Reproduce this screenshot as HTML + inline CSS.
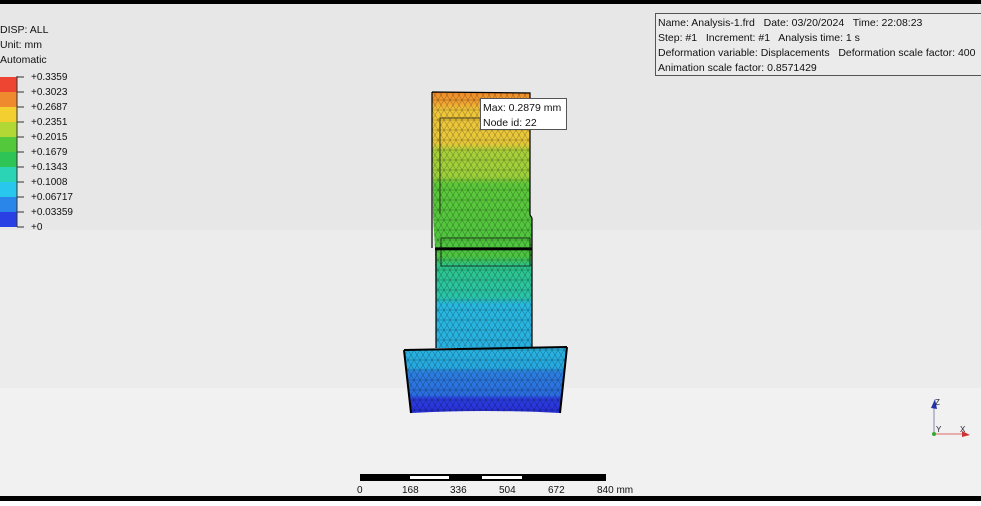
<!DOCTYPE html><html><head><style>
body{margin:0;width:981px;height:501px;overflow:hidden;font-family:"Liberation Sans",sans-serif;}
text{white-space:pre;}
</style></head><body>
<svg width="981" height="501" xmlns="http://www.w3.org/2000/svg" font-family="Liberation Sans, sans-serif" xml:space="preserve">
<defs>
<pattern id="mesh" width="12" height="10" patternUnits="userSpaceOnUse">
<path d="M0 0H12M0 10H12M0 10L6 0L12 10M0 0L6 10L12 0" stroke="#000" stroke-opacity="0.4" stroke-width="0.5" fill="none"/>
</pattern>
<linearGradient id="g1" x1="0" y1="92" x2="0" y2="348" gradientUnits="userSpaceOnUse">
<stop offset="0" stop-color="#f08a2a"/><stop offset="0.04" stop-color="#f0a030"/>
<stop offset="0.07" stop-color="#efc53a"/><stop offset="0.2" stop-color="#e8c83a"/>
<stop offset="0.23" stop-color="#a8d03a"/><stop offset="0.33" stop-color="#9cd03a"/>
<stop offset="0.36" stop-color="#5cc83a"/><stop offset="0.64" stop-color="#4cc440"/>
<stop offset="0.68" stop-color="#2cc48a"/><stop offset="0.8" stop-color="#2ac4a8"/>
<stop offset="0.83" stop-color="#28b8e0"/><stop offset="1" stop-color="#28b0e0"/>
</linearGradient>
<linearGradient id="g2" x1="0" y1="348" x2="0" y2="413" gradientUnits="userSpaceOnUse">
<stop offset="0" stop-color="#28b4e0"/><stop offset="0.3" stop-color="#26a8e0"/>
<stop offset="0.38" stop-color="#2c7ee0"/><stop offset="0.72" stop-color="#2a6ee0"/>
<stop offset="0.78" stop-color="#2a3ee0"/><stop offset="1" stop-color="#2830d8"/>
</linearGradient>
</defs>
<rect width="981" height="501" fill="#f1f1f1"/>
<rect y="0" width="981" height="230" fill="#e7e7e7"/>
<rect y="230" width="981" height="158" fill="#ececec"/>
<rect y="0" width="981" height="4" fill="#000"/>
<rect y="496" width="981" height="5" fill="#000"/>
<g font-size="10.5" fill="#111">
<text x="0" y="33">DISP: ALL</text><text x="0" y="48">Unit: mm</text><text x="0" y="63">Automatic</text>
</g>
<g>
<rect x="0" y="77" width="17" height="15" fill="#ee4432"/>
<rect x="0" y="92" width="17" height="15" fill="#f08a2e"/>
<rect x="0" y="107" width="17" height="15" fill="#f3d030"/>
<rect x="0" y="122" width="17" height="15" fill="#b2d836"/>
<rect x="0" y="137" width="17" height="15" fill="#52c83a"/>
<rect x="0" y="152" width="17" height="15" fill="#2ec456"/>
<rect x="0" y="167" width="17" height="15" fill="#2ad4b4"/>
<rect x="0" y="182" width="17" height="15" fill="#28c8ee"/>
<rect x="0" y="197" width="17" height="15" fill="#2a86e8"/>
<rect x="0" y="212" width="17" height="15" fill="#2840e4"/>
<path d="M17 76V227M17 77H24M17 92H24M17 107H24M17 122H24M17 137H24M17 152H24M17 167H24M17 182H24M17 197H24M17 212H24M17 227H24" stroke="#333" stroke-width="1"/>
</g>
<g font-size="10" fill="#111">
<text x="31" y="80">+0.3359</text><text x="31" y="95">+0.3023</text><text x="31" y="110">+0.2687</text>
<text x="31" y="125">+0.2351</text><text x="31" y="140">+0.2015</text><text x="31" y="155">+0.1679</text>
<text x="31" y="170">+0.1343</text><text x="31" y="185">+0.1008</text><text x="31" y="200">+0.06717</text>
<text x="31" y="215">+0.03359</text><text x="31" y="230">+0</text>
</g>
<rect x="655.5" y="13.5" width="330" height="62" fill="#ebebeb" stroke="#555"/>
<g font-size="10.5" fill="#111">
<text x="658" y="26">Name: Analysis-1.frd   Date: 03/20/2024   Time: 22:08:23</text>
<text x="658" y="41">Step: #1   Increment: #1   Analysis time: 1 s</text>
<text x="658" y="56">Deformation variable: Displacements   Deformation scale factor: 400</text>
<text x="658" y="71">Animation scale factor: 0.8571429</text>
</g>
<path d="M432 92L530 93L530 215L532 218L532 348L436 348L435 248L433 215Z" fill="url(#g1)"/>
<path d="M432 92L530 93L530 215L532 218L532 348L436 348L435 248L433 215Z" fill="url(#mesh)"/>
<path d="M404 350L567 347L560 413Q485 409 411 413Z" fill="url(#g2)"/>
<path d="M404 350L567 347L560 413Q485 409 411 413Z" fill="url(#mesh)"/>
<path d="M432 92L530 93V215M432 92V248M435 248H532M436 248V348M532 218V348M530 215L532 218" stroke="#000" stroke-width="1.2" fill="none"/>
<path d="M435 249H532" stroke="#000" stroke-width="2.5"/>
<path d="M440 118H482M440 118V214M441 238H530V266H441Z" stroke="#111" stroke-width="0.8" fill="none"/>
<path d="M404 350L567 347M404 350L411 413M567 347L560 413" stroke="#000" stroke-width="2" fill="none"/>
<rect x="480.5" y="98.5" width="86" height="31" fill="#fff" stroke="#555"/>
<g font-size="10.5" fill="#111"><text x="483" y="111">Max: 0.2879 mm</text><text x="483" y="126">Node id: 22</text></g>
<rect x="360" y="474" width="246" height="7" fill="#000"/>
<rect x="410" y="476" width="39" height="3" fill="#fff"/>
<rect x="482" y="476" width="40" height="3" fill="#fff"/>
<g font-size="10" fill="#111">
<text x="357" y="493">0</text><text x="402" y="493">168</text><text x="450" y="493">336</text>
<text x="499" y="493">504</text><text x="548" y="493">672</text><text x="597" y="493">840 mm</text>
</g>
<path d="M934 434V404" stroke="#88a" stroke-width="1"/>
<path d="M931 408L935 399L937 409Z" fill="#2233aa"/>
<path d="M934 434H965" stroke="#d66" stroke-width="1"/>
<path d="M962 431L970 435L962 437Z" fill="#c33"/>
<circle cx="934" cy="434" r="2" fill="#3a3"/>
<g font-size="8" fill="#223"><text x="935" y="405">Z</text><text x="936" y="432">Y</text><text x="960" y="432">X</text></g>
</svg>
</body></html>
